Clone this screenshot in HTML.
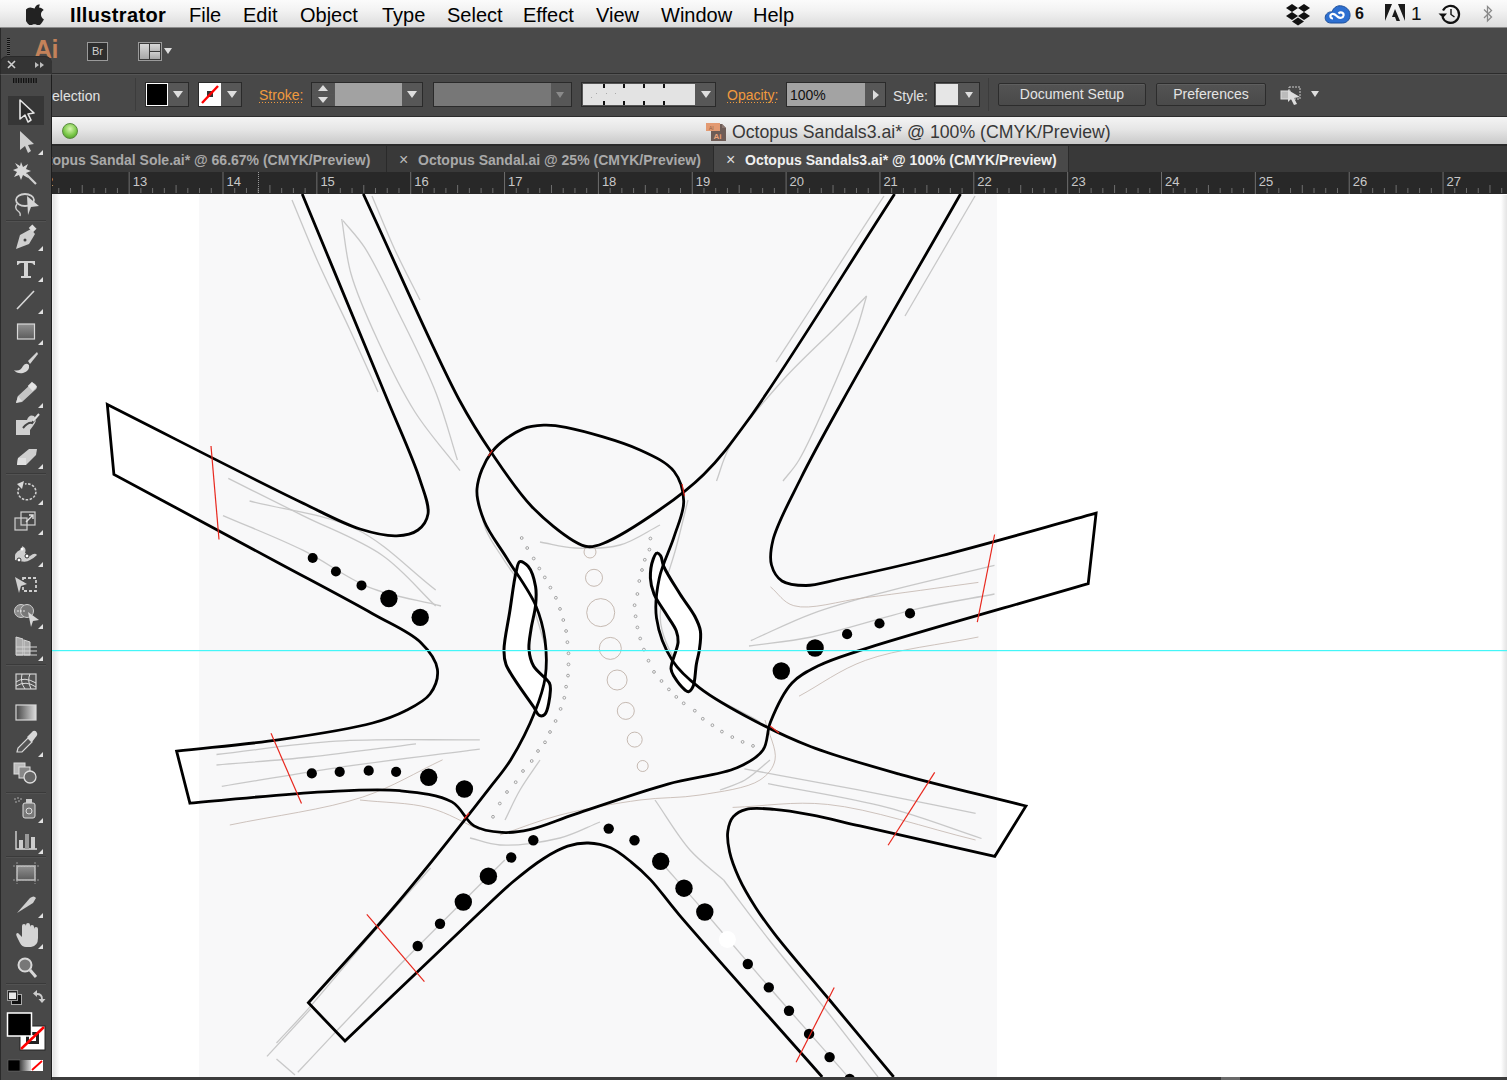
<!DOCTYPE html>
<html><head><meta charset="utf-8">
<style>
*{margin:0;padding:0;box-sizing:border-box}
html,body{width:1507px;height:1080px;overflow:hidden;background:#fff;font-family:"Liberation Sans",sans-serif}
.a{position:absolute}
#menubar{left:0;top:0;width:1507px;height:28px;background:linear-gradient(#fbfbfb,#f2f2f2 40%,#dcdcdc);border-bottom:1px solid #8c8c8c}
.mi{position:absolute;top:4px;font-size:20px;color:#000;white-space:nowrap;line-height:22px}
#appbar{left:0;top:28px;width:1507px;height:46px;background:#494949;border-bottom:1px solid #2c2c2c;border-left:1px solid #2a2a2a}
#ctrl{left:0;top:74px;width:1507px;height:42px;background:#484848;border-top:1px solid #565656}
#title{left:52px;top:116px;width:1455px;height:30px;background:linear-gradient(#f4f4f4,#e6e6e6 45%,#c9c9c9);border-top:1px solid #2c2c2c;border-bottom:2px solid #2a2a2a}
#tabs{left:52px;top:146px;width:1455px;height:26px;background:#393939}
#ruler{left:52px;top:172px;width:1455px;height:22px;background:#282828}
#canvas{left:52px;top:194px;width:1455px;height:883px;background:#fff;overflow:hidden}
#bottom{left:52px;top:1077px;width:1455px;height:3px;background:#3c3c3c}
#tools{z-index:10;left:0;top:74px;width:52px;height:1006px;background:#484848;border-right:1px solid #1e1e1e;border-left:1px solid #2a2a2a;border-top:1px solid #5a5a5a}
#toolhead{z-index:11;left:0;top:56px;width:52px;height:18px;background:#343434;border-radius:7px 7px 0 0;border-left:1px solid #2a2a2a;border-top:1px solid #2a2a2a}
.tab{position:absolute;top:0;height:27px;font-size:14px;font-weight:bold;color:#a9a9a9;white-space:nowrap;line-height:28px}
.ctl{position:absolute;font-size:14px;color:#e2e2e2;white-space:nowrap;line-height:16px}
.orange{color:#f09a3e}
.dots{position:absolute;height:1px;background:repeating-linear-gradient(90deg,#f09a3e 0 1.5px,transparent 1.5px 3px)}
.box{position:absolute;border:1px solid #2a2a2a;background:#575757}
.btn{position:absolute;top:83px;height:23px;background:linear-gradient(#535353,#4a4a4a);border:1px solid #2c2c2c;border-radius:2px;color:#e4e4e4;font-size:14px;text-align:center;line-height:21px;box-shadow:inset 0 1px 0 #5e5e5e}
.tri{position:absolute;width:0;height:0;border-left:5px solid transparent;border-right:5px solid transparent;border-top:7px solid #dedede}
.rl{position:absolute;top:175px;font-size:13px;color:#c8c8c8;line-height:14px}
</style></head><body>

<div id="menubar" class="a">
  <svg class="a" style="left:26px;top:4px" width="20" height="21" viewBox="0 0 20 21"><path d="M13.6 0.3c0.2 1.6-0.5 3-1.4 4-0.9 1-2.3 1.800-3.600 1.700-0.200-1.500 0.500-3 1.400-3.900 0.900-1 2.400-1.800 3.600-1.800zM17.900 15.300c-0.500 1.200-0.800 1.700-1.500 2.700-1 1.500-2.300 3.300-4 3.300-1.500 0-1.900-1-3.900-1-2 0-2.500 1-4 1-1.700 0-2.900-1.700-3.900-3.200-2.700-4.200-3-9.100-1.300-11.700 1.200-1.800 3.100-2.900 4.900-2.900 1.800 0 3 1 4.500 1 1.500 0 2.400-1 4.500-1 1.600 0 3.300 0.900 4.500 2.400-4 2.200-3.300 7.900 0.200 9.400z" fill="#222"/></svg>
  <span class="mi" style="left:70px;font-weight:bold;letter-spacing:0.35px">Illustrator</span>
  <span class="mi" style="left:189px">File</span>
  <span class="mi" style="left:243px">Edit</span>
  <span class="mi" style="left:300px">Object</span>
  <span class="mi" style="left:382px">Type</span>
  <span class="mi" style="left:447px">Select</span>
  <span class="mi" style="left:523px">Effect</span>
  <span class="mi" style="left:596px">View</span>
  <span class="mi" style="left:661px">Window</span>
  <span class="mi" style="left:753px">Help</span>
</div>

<div id="appbar" class="a"></div>
<div id="ctrl" class="a"></div>
<div id="title" class="a"></div>
<div id="tabs" class="a"></div>
<div id="ruler" class="a"></div>
<div id="canvas" class="a"></div>
<div class="a" style="left:52px;top:194px;width:8px;height:883px;background:linear-gradient(90deg,#f4f4f4 0,#e4e4e4 20%,#ececec 40%,#f6f6f6 70%,rgba(255,255,255,0) 100%)"></div>
<div class="a" style="left:1501px;top:195px;width:6px;height:882px;background:linear-gradient(90deg,rgba(255,255,255,0),#f0f0f0 50%,#e4e4e4)"></div>
<!--CANVAS-->
<svg class="a" style="left:52px;top:194px" width="1455" height="883" viewBox="0 0 1455 883">
<rect x="147" y="0" width="798" height="883" fill="#f8f8f9"/>
<g fill="none" stroke="#bdbdbd" stroke-width="1.3" opacity="0.8"><path d="M289.7 25.0 C292.8 43.3 293.7 60.9 299.0 79.8 C305.0 101.2 315.4 124.0 325.7 146.3 C336.6 170.0 348.9 195.9 363.0 218.0 C376.5 239.2 393.0 257.1 408.0 276.6 "/><path d="M291.0 26.6 C298.1 35.5 305.0 41.9 312.4 53.2 C323.4 70.0 335.5 96.4 347.0 119.7 C359.5 145.0 374.2 173.8 384.2 199.5 C393.1 222.4 398.3 243.8 405.4 266.0 "/><path d="M240.0 6.0 C248.7 26.7 256.6 47.0 266.0 68.0 C275.9 90.2 287.8 113.8 298.0 136.0 C307.7 157.1 316.7 177.3 326.0 198.0 "/><path d="M320.0 2.0 C327.7 20.0 334.9 38.5 343.0 56.0 C350.9 73.1 359.7 89.3 368.0 106.0 "/><path d="M814.6 102.0 C804.5 112.3 795.8 121.3 784.2 133.0 C769.0 148.4 748.2 166.8 731.0 186.0 C712.7 206.5 688.9 233.4 677.8 252.7 C670.5 265.4 668.9 275.6 664.5 287.0 "/><path d="M814.6 102.0 C811.5 112.3 809.4 121.4 805.4 133.0 C800.0 148.4 792.6 166.6 784.2 186.0 C773.8 210.1 757.7 248.3 747.0 266.0 C741.2 275.7 736.3 280.0 731.0 287.0 "/><path d="M832.0 2.0 C820.7 19.3 809.8 35.9 798.0 54.0 C785.2 73.7 770.8 96.3 758.0 116.0 C746.2 134.1 735.3 150.7 724.0 168.0 "/><path d="M923.0 2.0 C911.3 22.0 899.7 42.0 888.0 62.0 C876.3 82.0 864.7 102.0 853.0 122.0 "/><path d="M176.3 284.4 C201.1 296.8 225.6 309.0 250.8 321.6 C276.9 334.7 307.6 345.4 330.5 361.5 C351.3 376.1 366.0 395.2 383.7 412.0 "/><path d="M171.0 321.6 C197.6 333.1 225.7 343.8 250.8 356.2 C274.3 367.8 294.1 384.1 317.3 393.4 C340.2 402.6 365.1 405.8 389.0 412.0 "/><path d="M197.6 307.0 C233.1 316.3 272.4 319.6 304.0 335.0 C334.1 349.8 357.1 375.7 383.7 396.0 "/><path d="M698.8 446.6 C719.1 437.7 738.3 427.7 759.7 419.8 C782.4 411.4 804.8 405.5 831.4 398.3 C864.3 389.4 905.5 380.4 942.5 371.4 "/><path d="M697.0 452.0 C717.9 449.0 736.2 447.8 759.7 443.0 C790.9 436.6 834.4 421.9 867.2 414.4 C894.4 408.2 917.4 404.8 942.5 400.0 "/><path d="M164.5 560.5 C204.4 556.1 242.4 549.7 284.2 547.2 C329.8 544.4 379.9 546.3 427.8 545.8 "/><path d="M169.8 592.4 C207.9 586.2 243.9 579.7 284.2 573.8 C329.3 567.2 379.9 561.3 427.8 555.1 "/><path d="M164.5 571.0 C195.5 568.3 225.6 566.4 257.6 563.0 C291.9 559.4 328.5 554.2 364.0 549.8 "/><path d="M692.4 574.9 C729.9 581.8 767.0 588.3 805.0 595.6 C844.0 603.1 884.1 611.4 923.6 619.3 "/><path d="M716.0 589.7 C755.6 597.6 797.6 603.7 834.7 613.4 C868.4 622.2 897.9 634.1 929.5 644.5 "/><path d="M452.8 666.0 C420.9 697.8 386.4 731.5 357.0 761.5 C331.3 787.7 305.9 814.5 285.6 835.9 C270.4 852.0 259.1 864.2 245.8 878.3 "/><path d="M378.5 674.0 C358.1 697.0 337.6 719.7 317.4 743.0 C296.9 766.5 273.6 795.2 256.4 814.6 C244.2 828.3 235.1 837.5 224.5 849.0 "/><path d="M215.0 862.4 L259.0 814.6 "/><path d="M224.5 865.0 L243.0 881.0 "/><path d="M608.0 667.0 C622.9 684.0 636.6 699.3 652.8 718.0 C672.3 740.5 694.3 766.8 717.0 793.0 C742.3 822.2 771.0 854.3 798.0 885.0 "/><path d="M671.6 686.0 C687.1 706.3 701.6 726.2 718.0 747.0 C735.6 769.4 755.8 793.1 774.0 816.0 C791.8 838.4 808.7 860.7 826.0 883.0 "/><path d="M603.0 606.0 C614.7 622.7 625.6 642.0 638.0 656.0 C648.7 668.0 660.4 676.0 671.6 686.0 "/><path d="M426.0 302.0 C428.7 313.3 429.7 325.3 434.0 336.0 C438.3 346.7 445.3 355.3 452.0 366.0 C459.8 378.4 471.2 391.8 478.0 406.0 C484.8 420.1 488.0 436.0 493.0 451.0 "/><path d="M636.0 306.0 C632.0 322.0 628.3 337.9 624.0 354.0 C619.6 370.5 612.1 389.1 610.0 404.0 C608.4 415.7 607.0 424.6 610.0 436.0 C614.0 451.3 624.0 471.6 638.0 486.0 C654.7 503.2 684.7 514.0 708.0 528.0 "/><path d="M488.0 348.0 C499.7 350.0 510.6 353.4 523.0 354.0 C537.0 354.7 553.8 354.9 568.0 351.0 C582.1 347.2 594.7 337.7 608.0 331.0 "/><path d="M548.0 628.0 C534.7 633.3 523.0 640.2 508.0 644.0 C490.3 648.5 464.5 651.9 448.0 651.0 C436.2 650.3 428.0 646.3 418.0 644.0 "/><path d="M488.0 566.0 C481.3 576.0 473.9 585.8 468.0 596.0 C462.3 605.8 458.0 616.0 453.0 626.0 "/><path d="M718.0 566.0 C709.7 572.7 701.7 580.9 693.0 586.0 C685.0 590.7 676.3 592.7 668.0 596.0 "/></g>
<g fill="none" stroke="#c2b4ac" stroke-width="0.8"><path d="M718.5 392.9 C726.3 399.2 731.0 408.6 741.8 411.7 C758.5 416.6 786.8 406.9 813.4 403.6 C846.8 399.5 888.7 393.5 926.4 388.4 "/><path d="M747.0 502.2 C769.1 490.3 787.5 475.8 813.4 466.4 C845.4 454.8 888.7 450.8 926.4 443.0 "/><path d="M177.8 631.0 C222.1 621.7 272.7 615.7 310.8 603.0 C341.4 592.8 364.0 578.2 390.6 565.8 "/><path d="M680.6 613.4 C712.2 612.4 740.6 606.8 775.4 610.4 C819.6 614.9 874.2 634.1 923.6 646.0 "/><path d="M713.0 526.0 C716.3 539.3 725.2 555.3 723.0 566.0 C721.3 574.3 716.0 580.7 708.0 586.0 C695.4 594.4 668.1 597.7 648.0 601.0 C628.1 604.3 609.4 603.1 588.0 606.0 C563.2 609.4 532.6 614.6 508.0 621.0 C486.4 626.6 468.0 634.3 448.0 641.0 "/><path d="M428.0 636.0 C411.3 628.7 396.5 619.0 378.0 614.0 C357.0 608.3 331.3 608.7 308.0 606.0 "/></g>
<path d="M467.8 367.7 C469.8 367.0 473.8 369.6 476.1 372.3 C479.6 376.4 482.4 386.0 483.6 392.7 C484.7 398.9 484.2 404.7 483.6 411.2 C482.9 418.7 480.1 427.6 479.0 435.3 C478.0 442.3 476.4 449.2 477.0 455.6 C477.5 461.5 478.7 467.1 481.7 472.3 C485.1 478.3 495.1 484.2 497.4 489.0 C498.7 491.7 498.5 493.2 498.4 496.4 C498.1 502.1 496.0 517.3 492.8 520.4 C491.3 521.9 488.9 522.1 487.3 521.4 C485.1 520.5 484.3 516.9 481.7 513.0 C476.0 504.3 458.0 481.3 454.0 470.4 C451.8 464.5 452.0 461.6 452.0 455.6 C452.1 446.0 455.6 431.2 457.6 418.6 C459.7 405.4 461.8 386.9 464.1 377.9 C465.3 373.3 465.7 368.5 467.8 367.7 Z" fill="#fff"/>
<path d="M605.0 359.0 C606.1 358.8 607.7 360.4 608.7 361.9 C610.2 364.2 609.9 368.1 611.7 372.3 C614.8 379.5 622.6 391.3 628.0 400.0 C632.9 407.9 639.3 415.5 642.8 422.3 C645.5 427.5 647.6 431.7 648.4 437.0 C649.3 442.7 648.2 449.8 647.4 455.6 C646.7 460.7 645.3 464.6 644.4 469.9 C643.2 476.5 643.3 487.4 641.2 492.2 C640.0 494.9 638.1 497.5 636.5 497.8 C635.3 498.0 634.4 497.1 633.0 496.0 C630.2 493.7 624.5 486.6 622.1 482.6 C620.4 479.8 619.2 478.1 619.0 474.7 C618.7 468.5 625.7 455.2 626.1 448.2 C626.3 443.7 625.8 441.0 624.3 437.0 C622.3 431.4 616.9 424.8 613.2 418.6 C609.5 412.4 604.5 406.2 602.0 400.0 C599.9 394.7 598.6 389.7 598.4 384.1 C598.2 378.0 599.6 369.4 601.3 364.9 C602.3 362.2 603.6 359.2 605.0 359.0 Z" fill="#fff"/>
<g fill="none" stroke="#b9a9a0" stroke-width="0.8"><circle cx="538.0" cy="358.0" r="6"/><circle cx="542.0" cy="383.8" r="8.5"/><circle cx="548.7" cy="418.6" r="14"/><circle cx="558.3" cy="454.4" r="11"/><circle cx="565.1" cy="486.0" r="10"/><circle cx="573.8" cy="516.9" r="8.5"/><circle cx="582.7" cy="545.6" r="7.5"/><circle cx="590.7" cy="572.0" r="5.5"/></g>
<g fill="none" stroke="#9a9a9a" stroke-width="0.9"><circle cx="469.7" cy="344.0" r="1.4"/><circle cx="475.2" cy="354.0" r="1.4"/><circle cx="481.7" cy="364.5" r="1.4"/><circle cx="487.3" cy="374.5" r="1.4"/><circle cx="492.8" cy="383.4" r="1.4"/><circle cx="498.4" cy="393.6" r="1.4"/><circle cx="503.9" cy="403.8" r="1.4"/><circle cx="508.0" cy="414.9" r="1.4"/><circle cx="511.3" cy="426.0" r="1.4"/><circle cx="514.1" cy="437.0" r="1.4"/><circle cx="515.4" cy="448.2" r="1.4"/><circle cx="516.5" cy="459.3" r="1.4"/><circle cx="516.5" cy="470.4" r="1.4"/><circle cx="516.0" cy="481.6" r="1.4"/><circle cx="514.1" cy="492.7" r="1.4"/><circle cx="512.3" cy="503.8" r="1.4"/><circle cx="508.6" cy="514.9" r="1.4"/><circle cx="503.6" cy="527.0" r="1.4"/><circle cx="493.0" cy="548.3" r="1.4"/><circle cx="479.7" cy="567.0" r="1.4"/><circle cx="463.7" cy="588.2" r="1.4"/><circle cx="447.8" cy="609.5" r="1.4"/><circle cx="441.0" cy="622.8" r="1.4"/><circle cx="498.0" cy="538.0" r="1.4"/><circle cx="486.0" cy="557.0" r="1.4"/><circle cx="471.0" cy="577.0" r="1.4"/><circle cx="455.0" cy="598.0" r="1.4"/><circle cx="598.4" cy="344.5" r="1.4"/><circle cx="597.4" cy="355.6" r="1.4"/><circle cx="592.8" cy="365.8" r="1.4"/><circle cx="590.0" cy="376.0" r="1.4"/><circle cx="587.3" cy="387.0" r="1.4"/><circle cx="585.4" cy="400.0" r="1.4"/><circle cx="582.6" cy="411.2" r="1.4"/><circle cx="583.6" cy="422.3" r="1.4"/><circle cx="585.4" cy="433.4" r="1.4"/><circle cx="588.2" cy="444.5" r="1.4"/><circle cx="591.9" cy="455.6" r="1.4"/><circle cx="596.5" cy="466.7" r="1.4"/><circle cx="602.0" cy="477.9" r="1.4"/><circle cx="609.5" cy="487.0" r="1.4"/><circle cx="616.9" cy="495.4" r="1.4"/><circle cx="624.3" cy="502.9" r="1.4"/><circle cx="631.7" cy="509.3" r="1.4"/><circle cx="642.8" cy="516.7" r="1.4"/><circle cx="650.8" cy="524.8" r="1.4"/><circle cx="660.4" cy="531.2" r="1.4"/><circle cx="669.9" cy="537.6" r="1.4"/><circle cx="680.3" cy="543.1" r="1.4"/><circle cx="690.6" cy="547.9" r="1.4"/><circle cx="701.0" cy="551.9" r="1.4"/></g>
<g fill="none" stroke="#000" stroke-width="2.8">
<path d="M250.2 0.0 C277.8 66.7 311.3 147.2 333.0 200.0 C347.2 234.6 360.9 263.6 368.0 286.0 C372.4 299.7 377.5 311.0 376.0 320.0 C374.9 326.6 370.9 332.4 366.0 336.0 C360.7 339.9 352.8 341.5 344.7 341.8 C334.2 342.2 321.4 339.2 308.0 335.0 C290.1 329.4 273.5 319.9 248.0 307.7 C201.8 285.6 119.5 242.9 55.3 210.5 L61.9 280.4 C117.3 310.2 180.7 344.2 228.0 369.7 C263.4 388.7 294.9 405.1 320.6 419.7 C339.4 430.4 357.6 437.5 368.7 448.4 C377.1 456.6 384.2 466.3 385.4 475.3 C386.5 483.5 383.0 493.2 378.0 500.0 C372.6 507.4 362.2 512.3 353.0 517.0 C343.2 522.1 334.4 525.2 320.6 529.0 C297.9 535.2 259.8 541.0 228.0 545.6 C194.6 550.5 159.1 553.3 124.6 557.2 L137.9 609.2 C182.4 605.4 232.9 599.7 271.3 597.8 C300.4 596.4 325.0 594.4 348.0 596.7 C367.1 598.6 387.0 600.5 399.9 607.9 C410.0 613.7 413.4 626.8 422.1 631.9 C430.2 636.6 440.6 637.8 449.9 638.4 C459.1 639.0 467.4 637.8 477.6 635.6 C491.1 632.7 505.3 626.0 523.2 620.1 C548.6 611.7 587.0 598.1 615.8 590.1 C640.4 583.2 668.0 581.3 685.0 573.8 C696.3 568.8 705.4 563.9 711.0 556.0 C716.3 548.4 714.5 537.8 718.5 528.0 C723.4 515.8 731.0 498.7 740.0 489.0 C747.7 480.8 756.7 476.6 767.0 471.5 C779.0 465.5 788.7 462.8 808.0 456.4 C853.1 441.5 960.1 411.9 1036.2 389.6 L1044.1 319.2 C992.1 333.5 934.4 350.3 888.0 362.0 C851.1 371.3 812.6 379.8 788.0 385.0 C773.7 388.0 764.4 391.5 754.0 391.5 C745.3 391.5 735.9 390.9 730.0 387.0 C724.8 383.5 721.2 377.2 719.5 371.0 C717.6 363.9 718.6 355.9 721.0 346.0 C725.0 329.6 738.3 305.7 749.0 284.0 C761.2 259.3 773.2 238.1 791.0 206.0 C820.1 153.5 869.3 68.7 908.5 0.0 "/>
<path d="M311.3 0.0 C343.3 68.7 382.7 160.2 407.3 206.0 C420.2 230.0 428.0 241.8 439.9 259.3 C452.2 277.4 465.5 297.6 479.9 312.7 C492.8 326.2 510.6 340.3 521.3 346.7 C527.2 350.2 531.1 352.3 536.1 352.7 C541.0 353.1 544.7 352.0 551.0 349.5 C564.1 344.4 590.0 328.0 607.3 316.0 C623.4 304.8 637.6 294.4 651.7 280.4 C667.4 264.9 677.9 251.0 696.1 226.0 C731.8 177.0 793.8 75.3 842.6 0.0 "/>
<path d="M841.7 883.0 C820.3 857.3 798.2 830.7 777.6 806.0 C758.4 783.0 735.4 756.6 722.1 739.3 C714.0 728.8 709.4 722.5 703.6 713.4 C697.6 704.0 691.3 693.5 686.9 683.8 C682.9 675.1 679.4 666.1 677.6 657.9 C676.0 650.8 675.0 643.7 675.8 637.5 C676.5 632.1 678.1 626.4 681.3 622.7 C684.4 619.1 688.9 616.7 694.3 615.3 C701.6 613.4 712.2 614.6 722.1 615.3 C733.6 616.1 746.0 618.3 759.1 620.8 C774.3 623.7 787.7 627.3 808.0 631.9 C841.8 639.5 897.9 652.2 942.8 662.3 L974.0 612.0 C932.0 601.4 886.2 591.0 848.0 580.3 C815.7 571.2 785.0 562.6 759.1 552.7 C738.1 544.7 721.7 536.8 703.4 527.2 C684.5 517.3 662.3 505.3 647.6 493.8 C636.3 485.0 627.6 477.7 620.5 466.7 C612.8 454.8 606.6 438.2 604.5 424.0 C602.6 410.7 604.5 397.3 607.3 384.1 C610.2 370.2 617.9 356.1 622.1 342.7 C625.9 330.5 632.0 318.4 631.7 307.1 C631.4 296.7 628.5 285.7 622.1 277.5 C614.8 268.2 602.1 262.4 588.0 256.0 C568.5 247.1 531.5 236.9 513.9 233.4 C504.5 231.5 499.0 230.9 491.7 231.2 C484.7 231.5 478.2 231.8 471.0 234.9 C461.2 239.1 447.5 248.0 439.9 257.9 C432.1 267.9 426.0 282.8 425.0 294.9 C424.1 306.0 428.0 316.7 432.4 327.5 C437.4 339.7 446.8 351.1 454.7 364.0 C463.7 378.7 477.1 396.2 483.6 411.2 C488.8 423.3 491.4 434.1 493.0 446.0 C494.6 458.1 494.9 471.4 493.2 483.4 C491.5 495.1 487.9 505.1 483.2 517.1 C477.3 532.0 467.6 551.5 459.1 565.3 C452.0 576.7 446.9 582.0 436.9 594.9 C417.3 620.2 378.3 670.1 348.0 706.0 C318.2 741.3 286.9 774.5 256.4 808.8 L293.0 847.0 C338.0 804.1 398.5 746.0 428.0 718.3 C442.2 704.9 449.0 697.9 459.8 688.8 C470.1 680.1 481.2 671.1 491.3 664.7 C499.7 659.4 507.6 654.8 515.6 652.2 C522.6 649.9 529.3 648.8 536.3 649.0 C543.6 649.2 551.6 650.8 558.6 653.8 C566.0 657.0 572.7 662.8 579.3 668.1 C586.0 673.4 591.7 678.5 598.4 685.6 C607.3 695.0 613.6 704.8 627.0 720.6 C656.3 755.1 722.5 828.9 770.2 883.0 "/>
<path d="M467.8 367.7 C469.8 367.0 473.8 369.6 476.1 372.3 C479.6 376.4 482.4 386.0 483.6 392.7 C484.7 398.9 484.2 404.7 483.6 411.2 C482.9 418.7 480.1 427.6 479.0 435.3 C478.0 442.3 476.4 449.2 477.0 455.6 C477.5 461.5 478.7 467.1 481.7 472.3 C485.1 478.3 495.1 484.2 497.4 489.0 C498.7 491.7 498.5 493.2 498.4 496.4 C498.1 502.1 496.0 517.3 492.8 520.4 C491.3 521.9 488.9 522.1 487.3 521.4 C485.1 520.5 484.3 516.9 481.7 513.0 C476.0 504.3 458.0 481.3 454.0 470.4 C451.8 464.5 452.0 461.6 452.0 455.6 C452.1 446.0 455.6 431.2 457.6 418.6 C459.7 405.4 461.8 386.9 464.1 377.9 C465.3 373.3 465.7 368.5 467.8 367.7 Z" stroke-width="3"/>
<path d="M605.0 359.0 C606.1 358.8 607.7 360.4 608.7 361.9 C610.2 364.2 609.9 368.1 611.7 372.3 C614.8 379.5 622.6 391.3 628.0 400.0 C632.9 407.9 639.3 415.5 642.8 422.3 C645.5 427.5 647.6 431.7 648.4 437.0 C649.3 442.7 648.2 449.8 647.4 455.6 C646.7 460.7 645.3 464.6 644.4 469.9 C643.2 476.5 643.3 487.4 641.2 492.2 C640.0 494.9 638.1 497.5 636.5 497.8 C635.3 498.0 634.4 497.1 633.0 496.0 C630.2 493.7 624.5 486.6 622.1 482.6 C620.4 479.8 619.2 478.1 619.0 474.7 C618.7 468.5 625.7 455.2 626.1 448.2 C626.3 443.7 625.8 441.0 624.3 437.0 C622.3 431.4 616.9 424.8 613.2 418.6 C609.5 412.4 604.5 406.2 602.0 400.0 C599.9 394.7 598.6 389.7 598.4 384.1 C598.2 378.0 599.6 369.4 601.3 364.9 C602.3 362.2 603.6 359.2 605.0 359.0 Z" stroke-width="3"/>
</g>
<g fill="#000"><circle cx="260.7" cy="364.0" r="5"/><circle cx="283.9" cy="377.5" r="5"/><circle cx="309.5" cy="391.4" r="5"/><circle cx="336.9" cy="404.5" r="8.7"/><circle cx="368.2" cy="423.4" r="8.7"/><circle cx="259.8" cy="579.4" r="5.1"/><circle cx="287.7" cy="577.8" r="5.1"/><circle cx="316.7" cy="576.7" r="5.1"/><circle cx="344.1" cy="577.8" r="5.1"/><circle cx="376.7" cy="583.3" r="8.7"/><circle cx="412.4" cy="595.0" r="8.7"/><circle cx="481.3" cy="646.3" r="5.2"/><circle cx="459.2" cy="663.5" r="5.2"/><circle cx="436.4" cy="682.2" r="8.7"/><circle cx="411.3" cy="708.0" r="8.7"/><circle cx="388.0" cy="729.8" r="5.2"/><circle cx="365.7" cy="752.0" r="5.2"/><circle cx="556.7" cy="634.6" r="5.2"/><circle cx="582.5" cy="646.3" r="5.2"/><circle cx="608.7" cy="667.3" r="8.7"/><circle cx="632.0" cy="694.2" r="8.7"/><circle cx="652.8" cy="718.0" r="8.7"/><circle cx="695.8" cy="770.0" r="5.2"/><circle cx="716.8" cy="793.4" r="5.2"/><circle cx="737.0" cy="816.7" r="5.2"/><circle cx="757.1" cy="839.9" r="5.2"/><circle cx="777.6" cy="863.1" r="5.2"/><circle cx="797.7" cy="885.0" r="5.2"/><circle cx="729.3" cy="477.0" r="8.7"/><circle cx="763.1" cy="454.0" r="8.7"/><circle cx="795.1" cy="440.2" r="5.1"/><circle cx="827.5" cy="429.5" r="5.1"/><circle cx="858.0" cy="419.4" r="5.1"/></g>
<circle cx="675.4" cy="745.5" r="8.5" fill="#fff"/>
<g stroke="#e8281e" stroke-width="1.2"><line x1="159.0" y1="252.0" x2="167.0" y2="345.5"/><line x1="219.0" y1="539.2" x2="249.5" y2="609.6"/><line x1="314.8" y1="720.4" x2="372.4" y2="787.6"/><line x1="942.6" y1="340.5" x2="925.3" y2="428.2"/><line x1="882.7" y1="578.4" x2="836.1" y2="651.3"/><line x1="782.2" y1="793.6" x2="744.1" y2="868.2"/><line x1="436.5" y1="262.0" x2="440.5" y2="256.0"/><line x1="630.0" y1="290.0" x2="632.5" y2="302.0"/><line x1="412.0" y1="625.0" x2="417.0" y2="619.0"/><line x1="718.0" y1="532.0" x2="727.0" y2="539.0"/></g>
<rect x="0" y="456" width="1455" height="1.2" fill="#44f6f8"/>
</svg>
<!--/CANVAS-->
<div class="a" style="z-index:5;left:1221px;top:1077px;width:19px;height:3px;background:#6a6a6a"></div>

<div id="bottom" class="a"></div>
<div id="tools" class="a"></div>
<div id="toolhead" class="a"></div>



<!-- menubar status icons -->
<svg class="a" style="left:1285px;top:2px" width="26" height="24" viewBox="0 0 26 24">
 <g fill="#111">
  <path d="M7 2 L13 6 L7 10 L1 6Z"/><path d="M19 2 L25 6 L19 10 L13 6Z"/>
  <path d="M1 14 L7 10 L13 14 L7 18Z"/><path d="M13 14 L19 10 L25 14 L19 18Z"/>
  <path d="M7 19.5 L13 15.5 L19 19.5 L13 23.5Z"/>
 </g>
</svg>
<svg class="a" style="left:1324px;top:4px" width="28" height="20" viewBox="0 0 28 20">
 <path d="M7 19 C2 19 0.5 15 1.5 12 C2.5 8.5 6 7.5 8 8 C9.5 3 14 1 18 2 C23 3 26.5 7 26 12 C25.5 16.5 22 19 18.5 19Z" fill="#2d6fd0" stroke="#1d4f9a" stroke-width="1"/>
 <path d="M9 14.5 C6 14.5 5.5 11 8 10 C10.5 9 12.5 12 14 13 C16 14.5 19 14 19.5 11.5 C20 8.5 16.5 7.5 14.5 9.5" fill="none" stroke="#fff" stroke-width="2.2"/>
</svg>
<div class="a" style="left:1355px;top:4px;font-size:16px;font-weight:bold;color:#111;line-height:20px">6</div>
<svg class="a" style="left:1385px;top:4px" width="21" height="18" viewBox="0 0 21 18">
 <path d="M0 0 H7 L0 17Z M13 0 H20 V17Z M10 5 L15 17 H11.5 L10 13 H7 L10 5Z" fill="#1a1a1a"/>
</svg>
<div class="a" style="left:1411px;top:4px;font-size:19px;color:#111;line-height:20px">1</div>
<svg class="a" style="left:1437px;top:3px" width="25" height="22" viewBox="0 0 25 22">
 <path d="M6 7.5 A8.5 8.5 0 1 1 5.5 14" fill="none" stroke="#111" stroke-width="2.2"/>
 <path d="M1.5 10.5 L6 15 L10 10.5Z" fill="#111"/>
 <path d="M14 6 V11.5 L17.5 14" fill="none" stroke="#111" stroke-width="1.4"/>
</svg>
<svg class="a" style="left:1482px;top:4px" width="12" height="20" viewBox="0 0 12 20">
 <path d="M2 5.5 L9.5 13 L5.5 17 V2.5 L9.5 6.5 L2 14" fill="none" stroke="#8a8a8a" stroke-width="1.3"/>
</svg>

<!-- app bar contents -->
<div class="a" style="left:7px;top:38px;width:3px;height:18px;background:repeating-linear-gradient(#111 0 1px,#5a5a5a 1px 2px)"></div>
<div class="a" style="left:34px;top:34px;font-size:25px;font-weight:bold;color:#c4825a;line-height:30px;letter-spacing:-0.5px">Ai</div>
<div class="a" style="left:87px;top:42px;width:21px;height:19px;border:1px solid #9a9a9a;background:#2e2e2e;color:#cfcfcf;font-size:11px;line-height:17px;text-align:center">Br</div>
<div class="a" style="left:138px;top:42px;width:24px;height:19px;border:1px solid #9a9a9a;background:#3a3a3a"></div>
<div class="a" style="left:140px;top:44px;width:9px;height:15px;background:linear-gradient(#d8d8d8,#a8a8a8)"></div>
<div class="a" style="left:150px;top:44px;width:10px;height:7px;background:linear-gradient(#d8d8d8,#b8b8b8)"></div>
<div class="a" style="left:150px;top:52px;width:10px;height:7px;background:linear-gradient(#d0d0d0,#a8a8a8)"></div>
<div class="tri" style="left:164px;top:48px;border-left-width:4px;border-right-width:4px;border-top-width:6px"></div>

<!-- control bar -->
<div class="ctl" style="left:52px;top:88px">election</div>
<div class="a" style="left:135px;top:78px;width:1px;height:33px;background:#3c3c3c"></div>
<div class="box" style="left:145px;top:82px;width:44px;height:25px"></div>
<div class="a" style="left:146px;top:83px;width:22px;height:23px;background:#000;border:1px solid #fff"></div>
<div class="tri" style="left:173px;top:91px"></div>
<div class="box" style="left:198px;top:82px;width:44px;height:25px"></div>
<div class="a" style="left:199px;top:83px;width:22px;height:23px;background:#fff"></div>
<svg class="a" style="left:199px;top:83px" width="22" height="23"><rect x="8" y="8" width="6" height="6" fill="#333"/><line x1="3" y1="20" x2="19" y2="3" stroke="#f00" stroke-width="2.4"/></svg>
<div class="tri" style="left:227px;top:91px"></div>
<div class="ctl orange" style="left:259px;top:87px">Stroke:</div>
<div class="dots" style="left:259px;top:102px;width:44px"></div>
<div class="box" style="left:311px;top:82px;width:112px;height:25px"></div>
<div class="a" style="left:312px;top:83px;width:22px;height:11px;background:#555"></div>
<div class="a" style="left:312px;top:95px;width:22px;height:11px;background:#555"></div>
<div class="a" style="left:318px;top:85px;width:0;height:0;border-left:5px solid transparent;border-right:5px solid transparent;border-bottom:6px solid #ddd"></div>
<div class="tri" style="left:318px;top:97px;border-top-width:6px"></div>
<div class="a" style="left:335px;top:83px;width:67px;height:23px;background:#a2a2a2"></div>
<div class="tri" style="left:407px;top:91px"></div>
<div class="box" style="left:433px;top:82px;width:139px;height:25px"></div>
<div class="a" style="left:434px;top:83px;width:117px;height:23px;background:#777"></div>
<div class="tri" style="left:556px;top:92px;border-top-color:#8a8a8a;border-top-width:6px;border-left-width:4px;border-right-width:4px"></div>
<div class="box" style="left:581px;top:82px;width:135px;height:25px"></div>
<div class="a" style="left:583px;top:84px;width:112px;height:21px;background:#e3e3e3"></div>
<svg class="a" style="left:583px;top:84px" width="112" height="21"><g fill="#111"><rect x="20" y="0" width="2" height="4"/><rect x="40" y="0" width="2" height="4"/><rect x="60" y="0" width="2" height="4"/><rect x="80" y="0" width="2" height="4"/><rect x="20" y="17" width="2" height="4"/><rect x="40" y="17" width="2" height="4"/><rect x="60" y="17" width="2" height="4"/><rect x="80" y="17" width="2" height="4"/></g><g fill="#aaa"><rect x="8" y="13" width="1" height="1"/><rect x="13" y="9" width="1" height="1"/><rect x="23" y="9" width="1" height="1"/><rect x="32" y="9" width="1" height="1"/></g></svg>
<div class="tri" style="left:701px;top:91px"></div>
<div class="ctl orange" style="left:727px;top:87px">Opacity:</div>
<div class="dots" style="left:727px;top:102px;width:51px"></div>
<div class="box" style="left:786px;top:82px;width:100px;height:25px"></div>
<div class="a" style="left:787px;top:83px;width:78px;height:23px;background:#a3a3a3"></div>
<div class="ctl" style="left:790px;top:87px;color:#111">100%</div>
<div class="a" style="left:873px;top:90px;width:0;height:0;border-top:5px solid transparent;border-bottom:5px solid transparent;border-left:6px solid #ddd"></div>
<div class="ctl" style="left:893px;top:88px">Style:</div>
<div class="box" style="left:934px;top:82px;width:46px;height:25px"></div>
<div class="a" style="left:936px;top:84px;width:22px;height:21px;background:#e6e6e6"></div>
<div class="tri" style="left:965px;top:92px;border-left-width:4px;border-right-width:4px;border-top-width:6px"></div>
<div class="a" style="left:988px;top:78px;width:1px;height:33px;background:#3c3c3c"></div>
<div class="btn" style="left:998px;width:148px">Document Setup</div>
<div class="btn" style="left:1156px;width:110px">Preferences</div>
<svg class="a" style="left:1280px;top:85px" width="24" height="20"><rect x="1" y="6" width="9" height="8" fill="#bbb" stroke="#ddd"/><rect x="9" y="2" width="11" height="12" fill="none" stroke="#ccc" stroke-dasharray="2 1"/><path d="M8 5 L20 12 L14 13 L17 19 L14 20 L11 14 L8 17Z" fill="#ddd"/></svg>
<div class="tri" style="left:1311px;top:91px;border-left-width:4px;border-right-width:4px;border-top-width:6px"></div>

<!-- title bar -->
<svg class="a" style="left:705px;top:121px" width="22" height="21" viewBox="0 0 22 21"><path d="M6 3 H17 L21 7 V20 H6Z" fill="#6e5c56"/><path d="M17 3 L21 7 H17Z" fill="#8a7670"/><rect x="1" y="2" width="14" height="8" fill="#e39a72"/><text x="8.5" y="18" font-family="Liberation Sans" font-size="8" font-weight="bold" fill="#e9a27a">Ai</text><text x="4" y="8.5" font-family="Liberation Sans" font-size="5" fill="#8a5a40">AI</text></svg>
<div class="a" style="left:732px;top:121px;font-size:17.7px;color:#383838;line-height:22px;white-space:nowrap">Octopus Sandals3.ai* @ 100% (CMYK/Preview)</div>
<div class="a" style="left:62px;top:123px;width:16px;height:16px;border-radius:50%;background:radial-gradient(circle at 50% 35%,#d8f5b0,#7cc94a 55%,#3f8a1c);border:1px solid #5a8a40"></div>

<!-- tabs -->
<div class="tab" style="left:40px;top:146px">ctopus Sandal Sole.ai* @ 66.67% (CMYK/Preview)</div>
<div class="a" style="left:386px;top:146px;width:1px;height:26px;background:#2a2a2a"></div>
<div class="tab" style="left:399px;top:146px;font-weight:normal;font-size:16px;color:#bbb">×</div>
<div class="tab" style="left:418px;top:146px">Octopus Sandal.ai @ 25% (CMYK/Preview)</div>
<div class="a" style="left:713px;top:146px;width:1px;height:26px;background:#2a2a2a"></div>
<div class="a" style="left:714px;top:146px;width:354px;height:26px;background:#494949"></div>
<div class="a" style="left:1068px;top:146px;width:1px;height:26px;background:#2a2a2a"></div>
<div class="tab" style="left:726px;top:146px;font-weight:normal;font-size:16px;color:#ddd">×</div>
<div class="tab" style="left:745px;top:146px;color:#f0f0f0">Octopus Sandals3.ai* @ 100% (CMYK/Preview)</div>

<!-- ruler -->
<svg class="a" style="left:52px;top:172px" width="1455" height="22"><rect x="-111.05" y="0" width="1" height="22" fill="#6e6e6e"/><rect x="-99.32" y="16" width="1" height="5" fill="#6e6e6e"/><rect x="-87.59" y="16" width="1" height="5" fill="#6e6e6e"/><rect x="-75.86" y="16" width="1" height="5" fill="#6e6e6e"/><rect x="-64.12" y="13" width="1" height="8" fill="#6e6e6e"/><rect x="-52.39" y="16" width="1" height="5" fill="#6e6e6e"/><rect x="-40.66" y="16" width="1" height="5" fill="#6e6e6e"/><rect x="-28.93" y="16" width="1" height="5" fill="#6e6e6e"/><rect x="-17.20" y="0" width="1" height="22" fill="#6e6e6e"/><rect x="-5.47" y="16" width="1" height="5" fill="#6e6e6e"/><rect x="6.26" y="16" width="1" height="5" fill="#6e6e6e"/><rect x="17.99" y="16" width="1" height="5" fill="#6e6e6e"/><rect x="29.73" y="13" width="1" height="8" fill="#6e6e6e"/><rect x="41.46" y="16" width="1" height="5" fill="#6e6e6e"/><rect x="53.19" y="16" width="1" height="5" fill="#6e6e6e"/><rect x="64.92" y="16" width="1" height="5" fill="#6e6e6e"/><rect x="76.65" y="0" width="1" height="22" fill="#6e6e6e"/><rect x="88.38" y="16" width="1" height="5" fill="#6e6e6e"/><rect x="100.11" y="16" width="1" height="5" fill="#6e6e6e"/><rect x="111.84" y="16" width="1" height="5" fill="#6e6e6e"/><rect x="123.58" y="13" width="1" height="8" fill="#6e6e6e"/><rect x="135.31" y="16" width="1" height="5" fill="#6e6e6e"/><rect x="147.04" y="16" width="1" height="5" fill="#6e6e6e"/><rect x="158.77" y="16" width="1" height="5" fill="#6e6e6e"/><rect x="170.50" y="0" width="1" height="22" fill="#6e6e6e"/><rect x="182.23" y="16" width="1" height="5" fill="#6e6e6e"/><rect x="193.96" y="16" width="1" height="5" fill="#6e6e6e"/><rect x="205.69" y="16" width="1" height="5" fill="#6e6e6e"/><rect x="217.43" y="13" width="1" height="8" fill="#6e6e6e"/><rect x="229.16" y="16" width="1" height="5" fill="#6e6e6e"/><rect x="240.89" y="16" width="1" height="5" fill="#6e6e6e"/><rect x="252.62" y="16" width="1" height="5" fill="#6e6e6e"/><rect x="264.35" y="0" width="1" height="22" fill="#6e6e6e"/><rect x="276.08" y="16" width="1" height="5" fill="#6e6e6e"/><rect x="287.81" y="16" width="1" height="5" fill="#6e6e6e"/><rect x="299.54" y="16" width="1" height="5" fill="#6e6e6e"/><rect x="311.28" y="13" width="1" height="8" fill="#6e6e6e"/><rect x="323.01" y="16" width="1" height="5" fill="#6e6e6e"/><rect x="334.74" y="16" width="1" height="5" fill="#6e6e6e"/><rect x="346.47" y="16" width="1" height="5" fill="#6e6e6e"/><rect x="358.20" y="0" width="1" height="22" fill="#6e6e6e"/><rect x="369.93" y="16" width="1" height="5" fill="#6e6e6e"/><rect x="381.66" y="16" width="1" height="5" fill="#6e6e6e"/><rect x="393.39" y="16" width="1" height="5" fill="#6e6e6e"/><rect x="405.12" y="13" width="1" height="8" fill="#6e6e6e"/><rect x="416.86" y="16" width="1" height="5" fill="#6e6e6e"/><rect x="428.59" y="16" width="1" height="5" fill="#6e6e6e"/><rect x="440.32" y="16" width="1" height="5" fill="#6e6e6e"/><rect x="452.05" y="0" width="1" height="22" fill="#6e6e6e"/><rect x="463.78" y="16" width="1" height="5" fill="#6e6e6e"/><rect x="475.51" y="16" width="1" height="5" fill="#6e6e6e"/><rect x="487.24" y="16" width="1" height="5" fill="#6e6e6e"/><rect x="498.97" y="13" width="1" height="8" fill="#6e6e6e"/><rect x="510.71" y="16" width="1" height="5" fill="#6e6e6e"/><rect x="522.44" y="16" width="1" height="5" fill="#6e6e6e"/><rect x="534.17" y="16" width="1" height="5" fill="#6e6e6e"/><rect x="545.90" y="0" width="1" height="22" fill="#6e6e6e"/><rect x="557.63" y="16" width="1" height="5" fill="#6e6e6e"/><rect x="569.36" y="16" width="1" height="5" fill="#6e6e6e"/><rect x="581.09" y="16" width="1" height="5" fill="#6e6e6e"/><rect x="592.82" y="13" width="1" height="8" fill="#6e6e6e"/><rect x="604.56" y="16" width="1" height="5" fill="#6e6e6e"/><rect x="616.29" y="16" width="1" height="5" fill="#6e6e6e"/><rect x="628.02" y="16" width="1" height="5" fill="#6e6e6e"/><rect x="639.75" y="0" width="1" height="22" fill="#6e6e6e"/><rect x="651.48" y="16" width="1" height="5" fill="#6e6e6e"/><rect x="663.21" y="16" width="1" height="5" fill="#6e6e6e"/><rect x="674.94" y="16" width="1" height="5" fill="#6e6e6e"/><rect x="686.67" y="13" width="1" height="8" fill="#6e6e6e"/><rect x="698.41" y="16" width="1" height="5" fill="#6e6e6e"/><rect x="710.14" y="16" width="1" height="5" fill="#6e6e6e"/><rect x="721.87" y="16" width="1" height="5" fill="#6e6e6e"/><rect x="733.60" y="0" width="1" height="22" fill="#6e6e6e"/><rect x="745.33" y="16" width="1" height="5" fill="#6e6e6e"/><rect x="757.06" y="16" width="1" height="5" fill="#6e6e6e"/><rect x="768.79" y="16" width="1" height="5" fill="#6e6e6e"/><rect x="780.52" y="13" width="1" height="8" fill="#6e6e6e"/><rect x="792.26" y="16" width="1" height="5" fill="#6e6e6e"/><rect x="803.99" y="16" width="1" height="5" fill="#6e6e6e"/><rect x="815.72" y="16" width="1" height="5" fill="#6e6e6e"/><rect x="827.45" y="0" width="1" height="22" fill="#6e6e6e"/><rect x="839.18" y="16" width="1" height="5" fill="#6e6e6e"/><rect x="850.91" y="16" width="1" height="5" fill="#6e6e6e"/><rect x="862.64" y="16" width="1" height="5" fill="#6e6e6e"/><rect x="874.37" y="13" width="1" height="8" fill="#6e6e6e"/><rect x="886.11" y="16" width="1" height="5" fill="#6e6e6e"/><rect x="897.84" y="16" width="1" height="5" fill="#6e6e6e"/><rect x="909.57" y="16" width="1" height="5" fill="#6e6e6e"/><rect x="921.30" y="0" width="1" height="22" fill="#6e6e6e"/><rect x="933.03" y="16" width="1" height="5" fill="#6e6e6e"/><rect x="944.76" y="16" width="1" height="5" fill="#6e6e6e"/><rect x="956.49" y="16" width="1" height="5" fill="#6e6e6e"/><rect x="968.22" y="13" width="1" height="8" fill="#6e6e6e"/><rect x="979.96" y="16" width="1" height="5" fill="#6e6e6e"/><rect x="991.69" y="16" width="1" height="5" fill="#6e6e6e"/><rect x="1003.42" y="16" width="1" height="5" fill="#6e6e6e"/><rect x="1015.15" y="0" width="1" height="22" fill="#6e6e6e"/><rect x="1026.88" y="16" width="1" height="5" fill="#6e6e6e"/><rect x="1038.61" y="16" width="1" height="5" fill="#6e6e6e"/><rect x="1050.34" y="16" width="1" height="5" fill="#6e6e6e"/><rect x="1062.08" y="13" width="1" height="8" fill="#6e6e6e"/><rect x="1073.81" y="16" width="1" height="5" fill="#6e6e6e"/><rect x="1085.54" y="16" width="1" height="5" fill="#6e6e6e"/><rect x="1097.27" y="16" width="1" height="5" fill="#6e6e6e"/><rect x="1109.00" y="0" width="1" height="22" fill="#6e6e6e"/><rect x="1120.73" y="16" width="1" height="5" fill="#6e6e6e"/><rect x="1132.46" y="16" width="1" height="5" fill="#6e6e6e"/><rect x="1144.19" y="16" width="1" height="5" fill="#6e6e6e"/><rect x="1155.92" y="13" width="1" height="8" fill="#6e6e6e"/><rect x="1167.66" y="16" width="1" height="5" fill="#6e6e6e"/><rect x="1179.39" y="16" width="1" height="5" fill="#6e6e6e"/><rect x="1191.12" y="16" width="1" height="5" fill="#6e6e6e"/><rect x="1202.85" y="0" width="1" height="22" fill="#6e6e6e"/><rect x="1214.58" y="16" width="1" height="5" fill="#6e6e6e"/><rect x="1226.31" y="16" width="1" height="5" fill="#6e6e6e"/><rect x="1238.04" y="16" width="1" height="5" fill="#6e6e6e"/><rect x="1249.77" y="13" width="1" height="8" fill="#6e6e6e"/><rect x="1261.51" y="16" width="1" height="5" fill="#6e6e6e"/><rect x="1273.24" y="16" width="1" height="5" fill="#6e6e6e"/><rect x="1284.97" y="16" width="1" height="5" fill="#6e6e6e"/><rect x="1296.70" y="0" width="1" height="22" fill="#6e6e6e"/><rect x="1308.43" y="16" width="1" height="5" fill="#6e6e6e"/><rect x="1320.16" y="16" width="1" height="5" fill="#6e6e6e"/><rect x="1331.89" y="16" width="1" height="5" fill="#6e6e6e"/><rect x="1343.62" y="13" width="1" height="8" fill="#6e6e6e"/><rect x="1355.36" y="16" width="1" height="5" fill="#6e6e6e"/><rect x="1367.09" y="16" width="1" height="5" fill="#6e6e6e"/><rect x="1378.82" y="16" width="1" height="5" fill="#6e6e6e"/><rect x="1390.55" y="0" width="1" height="22" fill="#6e6e6e"/><rect x="1402.28" y="16" width="1" height="5" fill="#6e6e6e"/><rect x="1414.01" y="16" width="1" height="5" fill="#6e6e6e"/><rect x="1425.74" y="16" width="1" height="5" fill="#6e6e6e"/><rect x="1437.47" y="13" width="1" height="8" fill="#6e6e6e"/><rect x="1449.21" y="16" width="1" height="5" fill="#6e6e6e"/><rect x="1460.94" y="16" width="1" height="5" fill="#6e6e6e"/><rect x="1472.67" y="16" width="1" height="5" fill="#6e6e6e"/><rect x="1484.40" y="0" width="1" height="22" fill="#6e6e6e"/><rect x="1496.13" y="16" width="1" height="5" fill="#6e6e6e"/><rect x="1507.86" y="16" width="1" height="5" fill="#6e6e6e"/><rect x="1519.59" y="16" width="1" height="5" fill="#6e6e6e"/><rect x="1531.33" y="13" width="1" height="8" fill="#6e6e6e"/><rect x="1543.06" y="16" width="1" height="5" fill="#6e6e6e"/><rect x="1554.79" y="16" width="1" height="5" fill="#6e6e6e"/><rect x="1566.52" y="16" width="1" height="5" fill="#6e6e6e"/></svg>
<span class="rl" style="left:38.8px">12</span><span class="rl" style="left:132.7px">13</span><span class="rl" style="left:226.5px">14</span><span class="rl" style="left:320.4px">15</span><span class="rl" style="left:414.2px">16</span><span class="rl" style="left:508.0px">17</span><span class="rl" style="left:601.9px">18</span><span class="rl" style="left:695.7px">19</span><span class="rl" style="left:789.6px">20</span><span class="rl" style="left:883.4px">21</span><span class="rl" style="left:977.3px">22</span><span class="rl" style="left:1071.2px">23</span><span class="rl" style="left:1165.0px">24</span><span class="rl" style="left:1258.8px">25</span><span class="rl" style="left:1352.7px">26</span><span class="rl" style="left:1446.5px">27</span>
<div class="a" style="left:258px;top:172px;width:1px;height:21px;border-left:1px dotted #999"></div>

<!-- tools -->
<svg class="a" style="left:0;top:0;z-index:12" width="52" height="1080"><path d="M8 61 L15 68 M15 61 L8 68" stroke="#cfcfcf" stroke-width="1.6"/><path d="M35 62 L39 65 L35 68Z M40 62 L44 65 L40 68Z" fill="#bcbcbc"/><rect x="13.0" y="78" width="1.3" height="5" fill="#111"/><rect x="15.5" y="78" width="1.3" height="5" fill="#111"/><rect x="18.0" y="78" width="1.3" height="5" fill="#111"/><rect x="20.5" y="78" width="1.3" height="5" fill="#111"/><rect x="23.0" y="78" width="1.3" height="5" fill="#111"/><rect x="25.5" y="78" width="1.3" height="5" fill="#111"/><rect x="28.0" y="78" width="1.3" height="5" fill="#111"/><rect x="30.5" y="78" width="1.3" height="5" fill="#111"/><rect x="33.0" y="78" width="1.3" height="5" fill="#111"/><rect x="35.5" y="78" width="1.3" height="5" fill="#111"/><rect x="8" y="96" width="36" height="29" fill="#363636"/><path d="M20 100 L34 113 L28 114 L31 120 L28 122 L25 115 L20 119Z" fill="#2a2a2a" stroke="#e4e4e4" stroke-width="1.6" stroke-linejoin="round"/><path d="M20 131 L34 144 L28 145 L31 151 L28 153 L25 146 L20 150Z" fill="#cfcfcf"/><path d="M43 155 L43 150 L38 155Z" fill="#e0e0e0"/><path d="M21 162 L23 167 L28 164 L26 169 L31 171 L26 173 L28 178 L23 175 L21 180 L19 175 L14 177 L17 172 L13 170 L18 168 L15 163 L20 166Z" fill="#d8d8d8"/><line x1="26" y1="174" x2="36" y2="184" stroke="#d0d0d0" stroke-width="2.2"/><ellipse cx="25" cy="200" rx="9" ry="6" fill="none" stroke="#d0d0d0" stroke-width="1.8"/><path d="M17 204 q-3 4 1 7 q3 2 2 5" fill="none" stroke="#ccc" stroke-width="1.4"/><path d="M27 196 L39 206 L31 207 L28 215Z" fill="#d4d4d4"/><rect x="6" y="220" width="40" height="1" fill="#3a3a3a"/><rect x="6" y="221" width="40" height="1" fill="#525252"/><path d="M16 249 L20 235 L31 229 L35 234 L29 244Z" fill="#cfcfcf"/><rect x="30" y="226" width="6" height="5" transform="rotate(45 33 228)" fill="#ddd"/><circle cx="25" cy="240" r="1.5" fill="#444"/><path d="M43 251 L43 246 L38 251Z" fill="#e0e0e0"/><path d="M17 261 H35 V265 H34 Q33 263 31 263 H28 V276 H31 V278 H21 V276 H24 V263 H21 Q19 263 18 265 H17Z" fill="#d4d4d4"/><path d="M43 282 L43 277 L38 282Z" fill="#e0e0e0"/><line x1="17" y1="309" x2="34" y2="291" stroke="#d8d8d8" stroke-width="1.6"/><path d="M43 314 L43 309 L38 314Z" fill="#e0e0e0"/><defs><linearGradient id="rg" x1="0" y1="0" x2="0" y2="1"><stop offset="0" stop-color="#909090"/><stop offset="1" stop-color="#5c5c5c"/></linearGradient><linearGradient id="lg" x1="0" y1="0" x2="1" y2="0"><stop offset="0" stop-color="#444"/><stop offset="1" stop-color="#ddd"/></linearGradient></defs><rect x="17.5" y="324" width="17" height="15" fill="url(#rg)" stroke="#d8d8d8" stroke-width="1.2"/><path d="M43 345 L43 340 L38 345Z" fill="#e0e0e0"/><path d="M28 361 L37 352 L38 354 L30 364Z" fill="#d4d4d4"/><path d="M14 370 Q20 372 23 366 Q26 362 29 365 Q30 371 23 373 Q17 374 14 370Z" fill="#d8d8d8"/><path d="M16 403 L18 396 L31 384 Q34 382 36 385 Q38 388 35 390 L22 402Z" fill="#c4c4c4"/><path d="M16 403 L18 396 L22 401Z" fill="#ddd"/><rect x="29" y="383" width="7" height="6" transform="rotate(45 32 386)" fill="#e4e4e4"/><path d="M43 408 L43 403 L38 408Z" fill="#e0e0e0"/><path d="M16 420 L27 420 Q29 414 34 416 Q38 420 33 426 L30 430 V435 H16Z" fill="#d0d0d0"/><path d="M23 428 Q28 422 32 423 L39 414" fill="none" stroke="#444" stroke-width="2"/><path d="M33 421 L39 414" stroke="#e0e0e0" stroke-width="2"/><path d="M18 458 L29 449 L37 449 L36 455 L26 465 L17 465Z" fill="#cfcfcf"/><path d="M18 458 L26 458 L26 465 L17 465Z" fill="#e0e0e0"/><path d="M43 469 L43 464 L38 469Z" fill="#e0e0e0"/><rect x="6" y="473" width="40" height="1" fill="#3a3a3a"/><rect x="6" y="474" width="40" height="1" fill="#525252"/><path d="M19 488 A9 8 0 1 0 25 484" fill="none" stroke="#cfcfcf" stroke-width="1.6" stroke-dasharray="2.5 1.5"/><path d="M17 484 L24 481 L22 489Z" fill="#d8d8d8"/><path d="M43 505 L43 500 L38 505Z" fill="#e0e0e0"/><rect x="15" y="518" width="12" height="12" fill="#555" stroke="#d0d0d0" stroke-width="1.2"/><rect x="21" y="512" width="14" height="13" fill="none" stroke="#d0d0d0" stroke-width="1.2"/><path d="M26 522 L33 515 M29 515 H33 V519" stroke="#e0e0e0" stroke-width="1.4" fill="none"/><path d="M43 535 L43 530 L38 535Z" fill="#e0e0e0"/><path d="M15 560 Q14 552 20 550 Q23 548 22 546 Q27 548 25 553 L30 556 Q35 552 37 555 Q34 558 30 560 Q26 563 20 561Z" fill="#cfcfcf"/><circle cx="19" cy="560" r="2" fill="#fff" stroke="#333"/><circle cx="27" cy="556" r="2" fill="#fff" stroke="#333"/><circle cx="22" cy="549" r="1.5" fill="#fff"/><path d="M43 567 L43 562 L38 567Z" fill="#e0e0e0"/><rect x="23" y="578" width="13" height="13" fill="none" stroke="#cfcfcf" stroke-width="1.8" stroke-dasharray="3 2"/><path d="M15 577 L27 584 L21 586 L19 593Z" fill="#d0d0d0"/><circle cx="21" cy="611" r="6.5" fill="#8a8a8a" stroke="#d0d0d0"/><circle cx="27" cy="611" r="6.5" fill="#777" stroke="#d0d0d0"/><path d="M28 612 L39 620 L33 621 L31 627Z" fill="#d8d8d8"/><g fill="#eee"><circle cx="18" cy="611" r=".8"/><circle cx="21" cy="611" r=".8"/><circle cx="24" cy="611" r=".8"/></g><path d="M43 629 L43 624 L38 629Z" fill="#e0e0e0"/><path d="M16 637 L23 639 V655 H16Z M24 640 L30 642 V655 H24Z M16 647 H37 M16 651 H37 M16 655 H37" fill="#aaa" stroke="#d4d4d4" stroke-width="1"/><path d="M43 661 L43 656 L38 661Z" fill="#e0e0e0"/><rect x="6" y="664" width="40" height="1" fill="#3a3a3a"/><rect x="6" y="665" width="40" height="1" fill="#525252"/><rect x="16" y="674" width="20" height="15" fill="#555" stroke="#d0d0d0" stroke-width="1.2"/><path d="M16 682 Q24 676 36 683 M16 686 Q26 680 36 687 M22 674 Q20 682 25 689 M30 674 Q27 680 31 689" fill="none" stroke="#ddd" stroke-width="1"/><rect x="16" y="705" width="20" height="15" fill="url(#lg)" stroke="#d8d8d8" stroke-width="1.2"/><path d="M17 752 L18 748 L28 738 L32 742 L22 752Z" fill="#555" stroke="#d8d8d8" stroke-width="1.2"/><path d="M27 737 L33 731 Q36 730 37 733 Q38 735 35 738 L32 742Z" fill="#d8d8d8"/><path d="M43 757 L43 752 L38 757Z" fill="#e0e0e0"/><rect x="14" y="763" width="11" height="11" fill="#bbb" stroke="#ddd"/><rect x="19" y="767" width="11" height="11" fill="#888" stroke="#ddd"/><circle cx="30" cy="777" r="6" fill="#666" stroke="#ddd" stroke-width="1.3"/><rect x="6" y="792" width="40" height="1" fill="#3a3a3a"/><rect x="6" y="793" width="40" height="1" fill="#525252"/><rect x="23" y="803" width="12" height="15" rx="2" fill="#777" stroke="#ddd"/><circle cx="29" cy="811" r="3" fill="none" stroke="#ddd"/><rect x="26" y="799" width="6" height="4" fill="#ccc"/><g fill="#bbb"><circle cx="15" cy="799" r=".8"/><circle cx="18" cy="798" r=".8"/><circle cx="21" cy="799" r=".8"/><circle cx="16" cy="802" r=".8"/><circle cx="19" cy="801" r=".8"/></g><path d="M43 823 L43 818 L38 823Z" fill="#e0e0e0"/><path d="M16 831 V849 H37" fill="none" stroke="#ddd" stroke-width="1.3"/><rect x="19" y="840" width="4" height="9" fill="#ccc"/><rect x="25" y="834" width="4" height="15" fill="#999"/><rect x="31" y="837" width="4" height="12" fill="#ccc"/><path d="M43 854 L43 849 L38 854Z" fill="#e0e0e0"/><rect x="6" y="856" width="40" height="1" fill="#3a3a3a"/><rect x="6" y="857" width="40" height="1" fill="#525252"/><rect x="17" y="866" width="18" height="14" fill="url(#rg)" stroke="#d8d8d8" stroke-width="1.2"/><path d="M13 866 H39 M13 880 H39 M17 862 V884 M35 862 V884" stroke="#aaa" stroke-width=".8" stroke-dasharray="2 1"/><path d="M17 913 L30 898 Q34 895 36 898 L33 903 Z" fill="#d0d0d0"/><path d="M43 918 L43 913 L38 918Z" fill="#e0e0e0"/><path d="M17 937 Q15 933 18 933 L22 937 V926 Q22 924 24 924 Q26 924 26 926 V933 V925 Q26 923 28 923 Q30 923 30 925 V933 V927 Q30 925 32 925 Q34 925 34 927 V934 V929 Q34 927 36 927 Q38 927 38 929 V938 Q38 946 31 947 H26 Q22 947 20 943Z" fill="#d4d4d4"/><path d="M43 949 L43 944 L38 949Z" fill="#e0e0e0"/><circle cx="25" cy="965" r="6.5" fill="#777" stroke="#d8d8d8" stroke-width="2"/><line x1="30" y1="970" x2="36" y2="977" stroke="#d8d8d8" stroke-width="3"/><rect x="6" y="983" width="40" height="1" fill="#3a3a3a"/><rect x="6" y="984" width="40" height="1" fill="#525252"/><rect x="11.5" y="994.5" width="10" height="10" fill="#111" stroke="#aaa"/><rect x="7.5" y="990.5" width="10" height="10" fill="#222" stroke="#999"/><rect x="9" y="992.5" width="7" height="6.5" fill="#e8e8e8"/><path d="M37 994 Q42 994 42 999" fill="none" stroke="#ccc" stroke-width="1.8"/><path d="M33 993.5 L37 990 V997Z" fill="#ccc"/><path d="M38.5 999 H45.5 L42 1003Z" fill="#ccc"/><rect x="20" y="1026" width="25" height="24" fill="#fff" stroke="#222"/><rect x="26" y="1032" width="13" height="12" fill="#222"/><rect x="29" y="1035" width="7" height="6" fill="#fff"/><line x1="21" y1="1049" x2="44" y2="1027" stroke="#f00" stroke-width="2.5"/><rect x="7.5" y="1013" width="24" height="23" fill="#000" stroke="#fff" stroke-width="1.5"/><rect x="8" y="1060" width="12" height="11" fill="#000" stroke="#777" stroke-width=".5"/><rect x="20" y="1060" width="11" height="11" fill="url(#lg)"/><rect x="31" y="1060" width="12" height="11" fill="#fff"/><line x1="32" y1="1070" x2="42" y2="1061" stroke="#f00" stroke-width="1.8"/></svg>
</body></html>
